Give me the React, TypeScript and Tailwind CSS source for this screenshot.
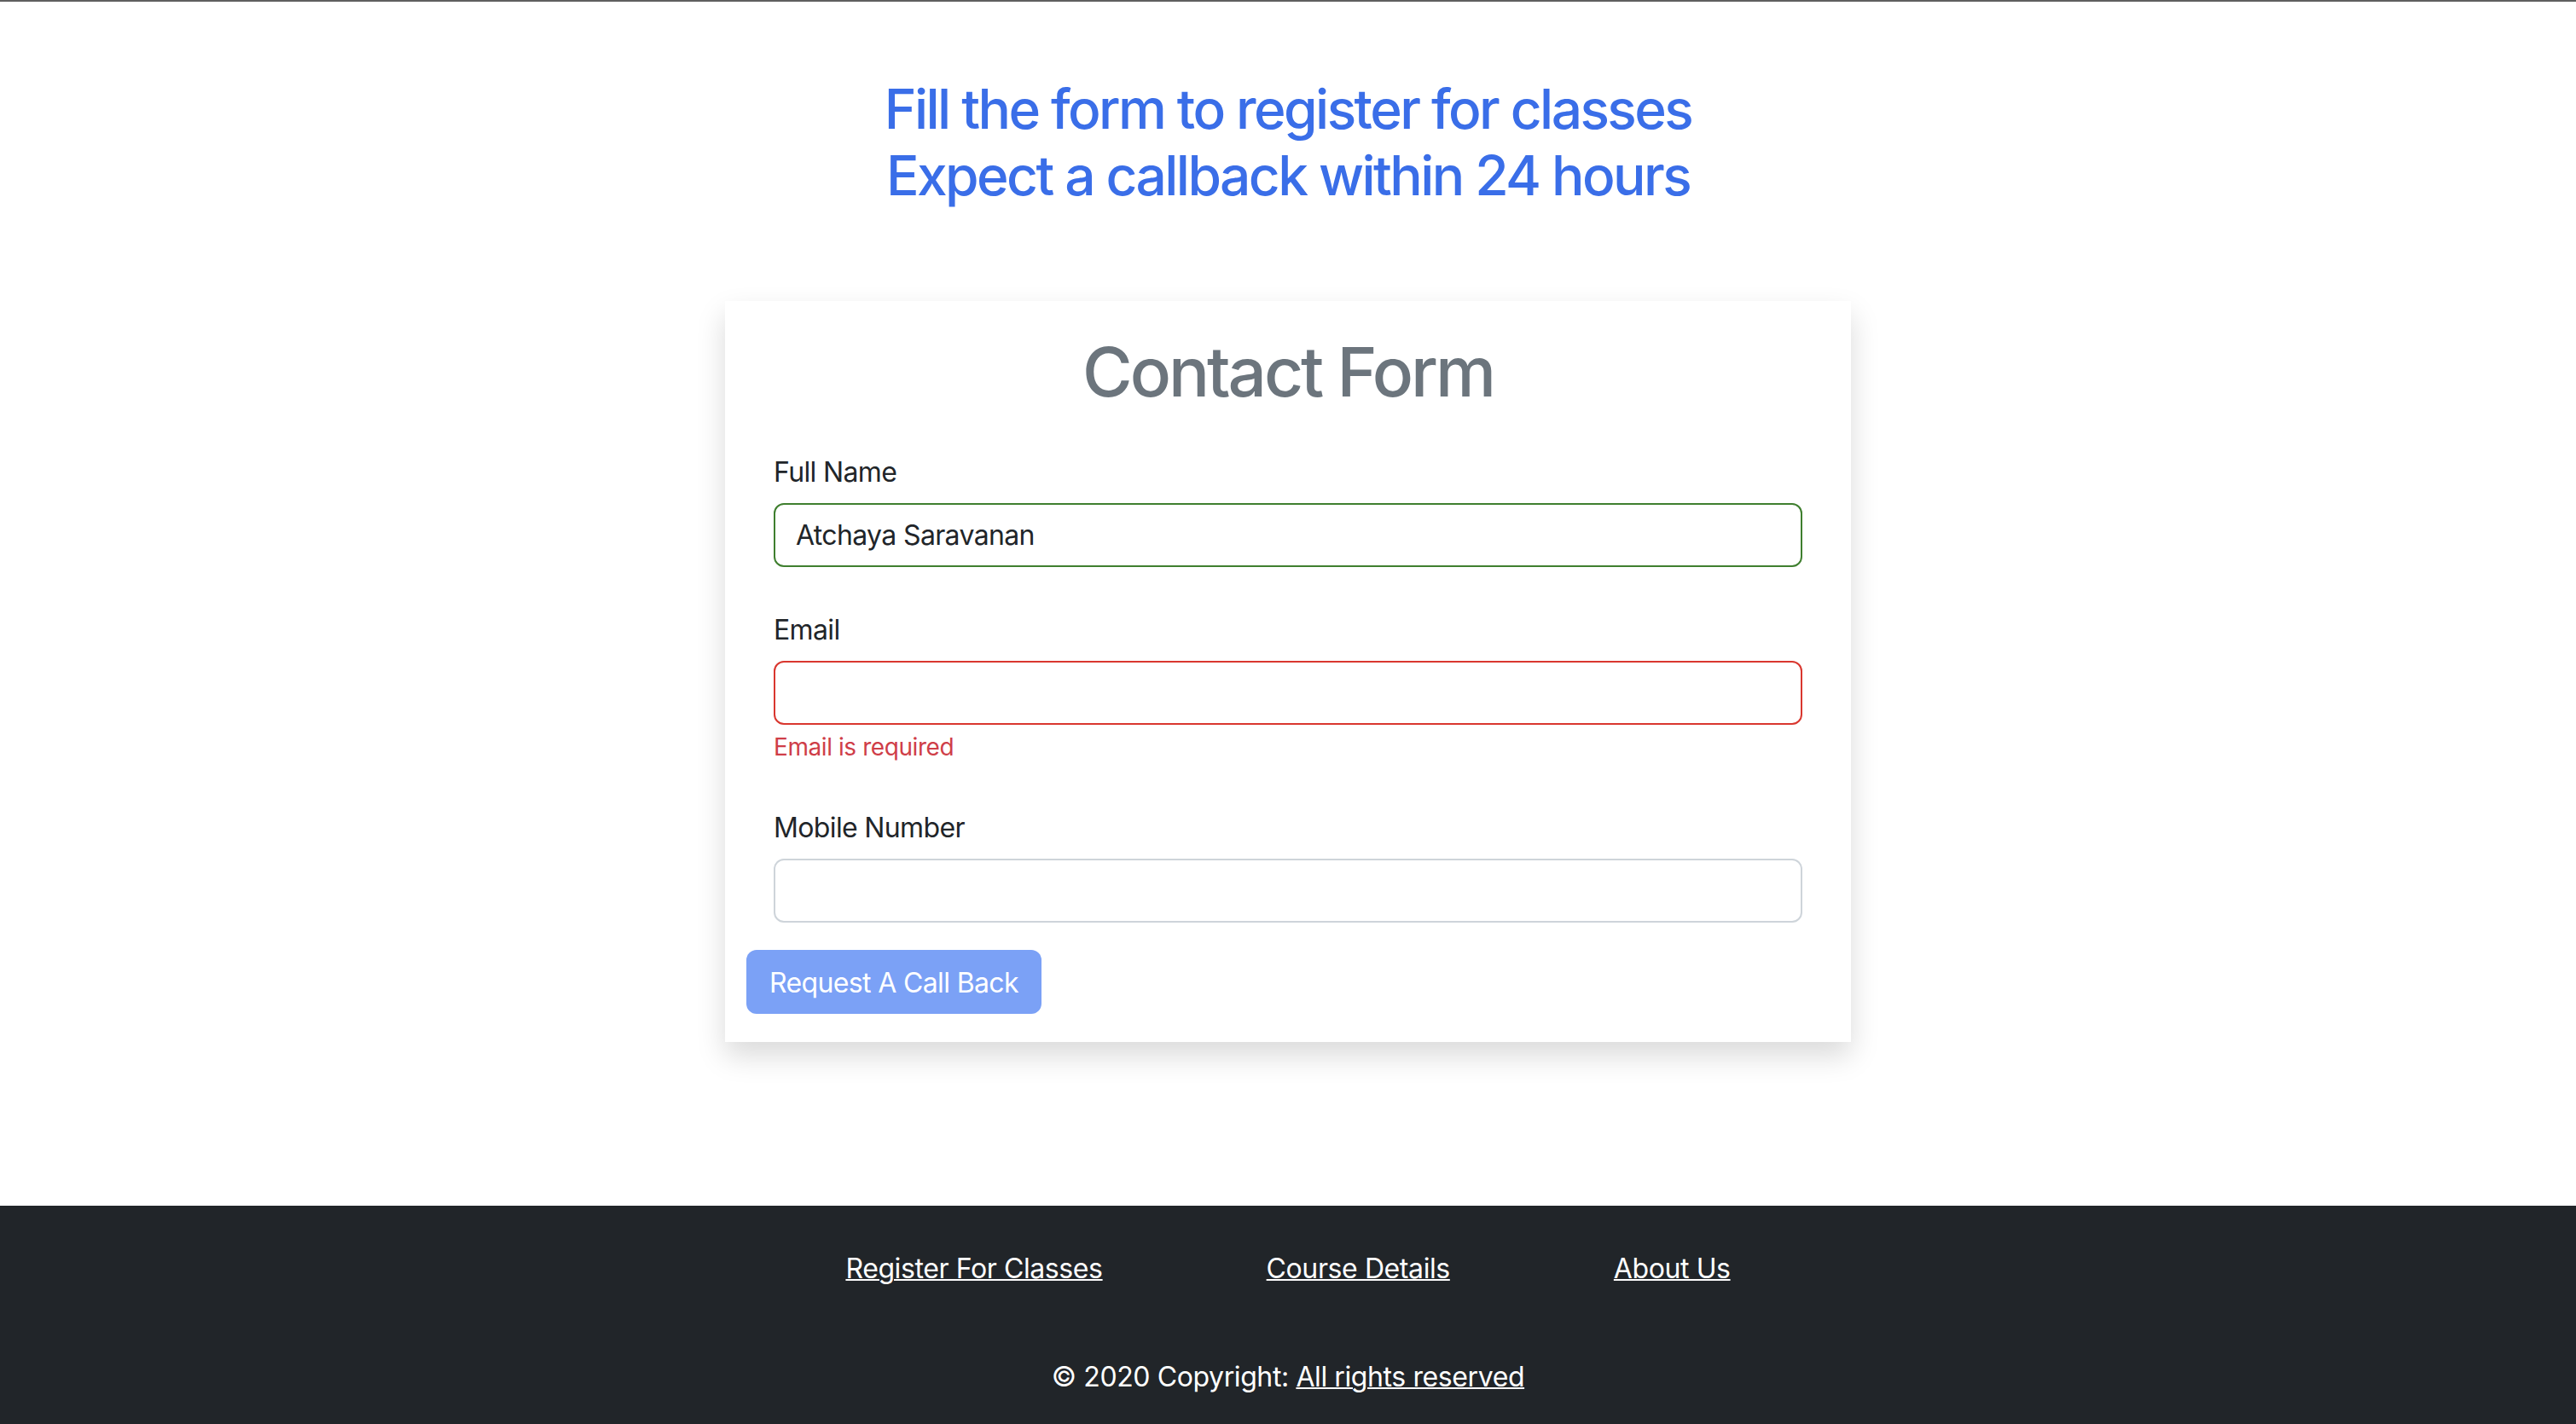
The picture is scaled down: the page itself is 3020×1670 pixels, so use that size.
import React from "react"

const font = { fontFamily: "Inter, 'Noto Sans', sans-serif" }

interface FieldProps {
    label: string
    value?: string
    state?: "valid" | "invalid" | "idle"
    error?: string
}

// one labelled input of the contact form
const Field = ({ label, value, state = "idle", error }: FieldProps) => {
    const borderColor =
        state === "valid" ? "border-[#3f7f2f]" : state === "invalid" ? "border-[#d9372f]" : "border-[#ced4da]"

    return (
        <div className="flex flex-col">
            <label className="text-[32px] leading-[48px] tracking-[-0.02em] text-[#212529] mb-[12px]">{label}</label>
            <input
                readOnly
                value={value ?? ""}
                className={`h-[75px] w-full rounded-[12px] border-2 ${borderColor} bg-white px-[24px] text-[32px] tracking-[-0.02em] text-[#212529] outline-none`}
                style={font}
            />
            {error && <p className="mt-[5px] text-[28px] leading-[42px] tracking-[-0.015em] text-[#cf3e48]">{error}</p>}
        </div>
    )
}

const ContactForm = () => {
    return (
        <section className="mx-auto w-[1320px] bg-white pt-[35px] pb-[33px] shadow-[0_16px_32px_rgba(0,0,0,0.15)]">
            <h1 className="text-center text-[80px] leading-[96px] font-medium tracking-[-0.038em] text-[#6c757d]">Contact Form</h1>
            <div className="mt-[46px] flex flex-col px-[57px]">
                <Field label="Full Name" value="Atchaya Saravanan" state="valid" />
                <div className="mt-[50px]">
                    <Field label="Email" state="invalid" error="Email is required" />
                </div>
                <div className="mt-[50px]">
                    <Field label="Mobile Number" />
                </div>
            </div>
            <div className="mt-[32px] px-[25px]">
                <button
                    disabled
                    className="h-[75px] rounded-[12px] bg-[#7ba1f6] px-[27px] pt-[2px] text-[32px] tracking-[-0.02em] text-white"
                    style={font}
                >
                    Request A Call Back
                </button>
            </div>
        </section>
    )
}

const Footer = () => {
    return (
        <footer className="bg-[#212529] pt-[50px] pb-[31px] text-white tracking-[-0.025em]">
            <nav className="flex justify-center gap-[192px] text-[32px] leading-[48px]">
                <a href="#" className="underline decoration-2">Register For Classes</a>
                <a href="#" className="underline decoration-2">Course Details</a>
                <a href="#" className="underline decoration-2">About Us</a>
            </nav>
            <p className="mt-[79px] text-center text-[32px] leading-[48px]">
                © 2020 Copyright: <a href="#" className="underline decoration-2">All rights reserved</a>
            </p>
        </footer>
    )
}

export default function App() {
    return (
        <div className="min-h-[1670px] flex flex-col bg-white border-t-2 border-[#5f5f5f]" style={font}>
            <main className="flex-1 pb-[192px]">
                <div className="pt-[87px] text-center text-[64px] leading-[78px] font-medium tracking-[-0.04em] text-[#3a6ee8]">
                    <h2>Fill the form to register for classes</h2>
                    <h2>Expect a callback within 24 hours</h2>
                </div>
                <div className="mt-[108px]">
                    <ContactForm />
                </div>
            </main>
            <Footer />
        </div>
    )
}
